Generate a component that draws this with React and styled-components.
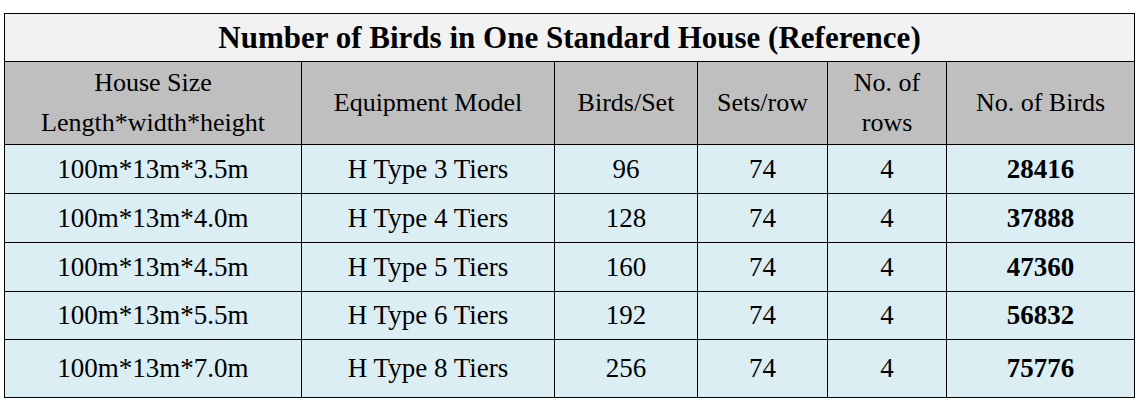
import React from 'react';
import styled, { createGlobalStyle } from 'styled-components';

const SERIF = `'Liberation Serif', 'Times New Roman', Times, 'Tinos', 'DejaVu Serif', serif`;

const GlobalStyle = createGlobalStyle`
  html, body {
    margin: 0;
    padding: 0;
    background: #ffffff;
  }
  body {
    font-family: ${SERIF};
    color: #000000;
  }
`;

const Page = styled.div`
  padding: 13px 0 0 4px;
`;

const Table = styled.table`
  border-collapse: collapse;
  table-layout: fixed;
  width: 1130px;
  font-family: ${SERIF};
  color: #000;
`;

const TitleCell = styled.th`
  height: 47px;
  padding: 0;
  border: 1px solid #000;
  background: #f2f2f2;
  font-family: ${SERIF};
  font-size: 31px;
  font-weight: 700;
  text-align: center;
  vertical-align: middle;
  line-height: 1;
`;

const HeadCell = styled.th`
  height: 82px;
  padding: 0;
  border: 1px solid #000;
  background: #bfbfbf;
  font-family: ${SERIF};
  font-size: 26px;
  font-weight: 400;
  line-height: 40px;
  text-align: center;
  vertical-align: middle;
`;

const Cell = styled.td`
  height: ${p => p.$h - 1}px;
  padding: 0;
  border: 1px solid #000;
  background: #daeef3;
  font-family: ${SERIF};
  font-size: 27px;
  font-weight: ${p => (p.$bold ? 700 : 400)};
  line-height: 1;
  text-align: center;
  vertical-align: middle;
`;

const columns = [297, 253, 143, 130, 119, 188];

const rows = [
  { size: '100m*13m*3.5m', model: 'H Type 3 Tiers', set: 96, total: 28416, h: 49 },
  { size: '100m*13m*4.0m', model: 'H Type 4 Tiers', set: 128, total: 37888, h: 49 },
  { size: '100m*13m*4.5m', model: 'H Type 5 Tiers', set: 160, total: 47360, h: 49 },
  { size: '100m*13m*5.5m', model: 'H Type 6 Tiers', set: 192, total: 56832, h: 48 },
  { size: '100m*13m*7.0m', model: 'H Type 8 Tiers', set: 256, total: 75776, h: 58 },
];

const App = () => (
  <>
    <GlobalStyle />
    <Page>
      <Table>
        <colgroup>
          {columns.map((w, i) => (
            <col key={i} style={{ width: w }} />
          ))}
        </colgroup>
        <thead>
          <tr>
            <TitleCell colSpan={6}>Number of Birds in One Standard House (Reference)</TitleCell>
          </tr>
          <tr>
            <HeadCell>
              House Size
              <br />
              Length*width*height
            </HeadCell>
            <HeadCell>Equipment Model</HeadCell>
            <HeadCell>Birds/Set</HeadCell>
            <HeadCell>Sets/row</HeadCell>
            <HeadCell>
              No. of
              <br />
              rows
            </HeadCell>
            <HeadCell>No. of Birds</HeadCell>
          </tr>
        </thead>
        <tbody>
          {rows.map(r => (
            <tr key={r.size}>
              <Cell $h={r.h}>{r.size}</Cell>
              <Cell $h={r.h}>{r.model}</Cell>
              <Cell $h={r.h}>{r.set}</Cell>
              <Cell $h={r.h}>74</Cell>
              <Cell $h={r.h}>4</Cell>
              <Cell $h={r.h} $bold>{r.total}</Cell>
            </tr>
          ))}
        </tbody>
      </Table>
    </Page>
  </>
);

export default App;
